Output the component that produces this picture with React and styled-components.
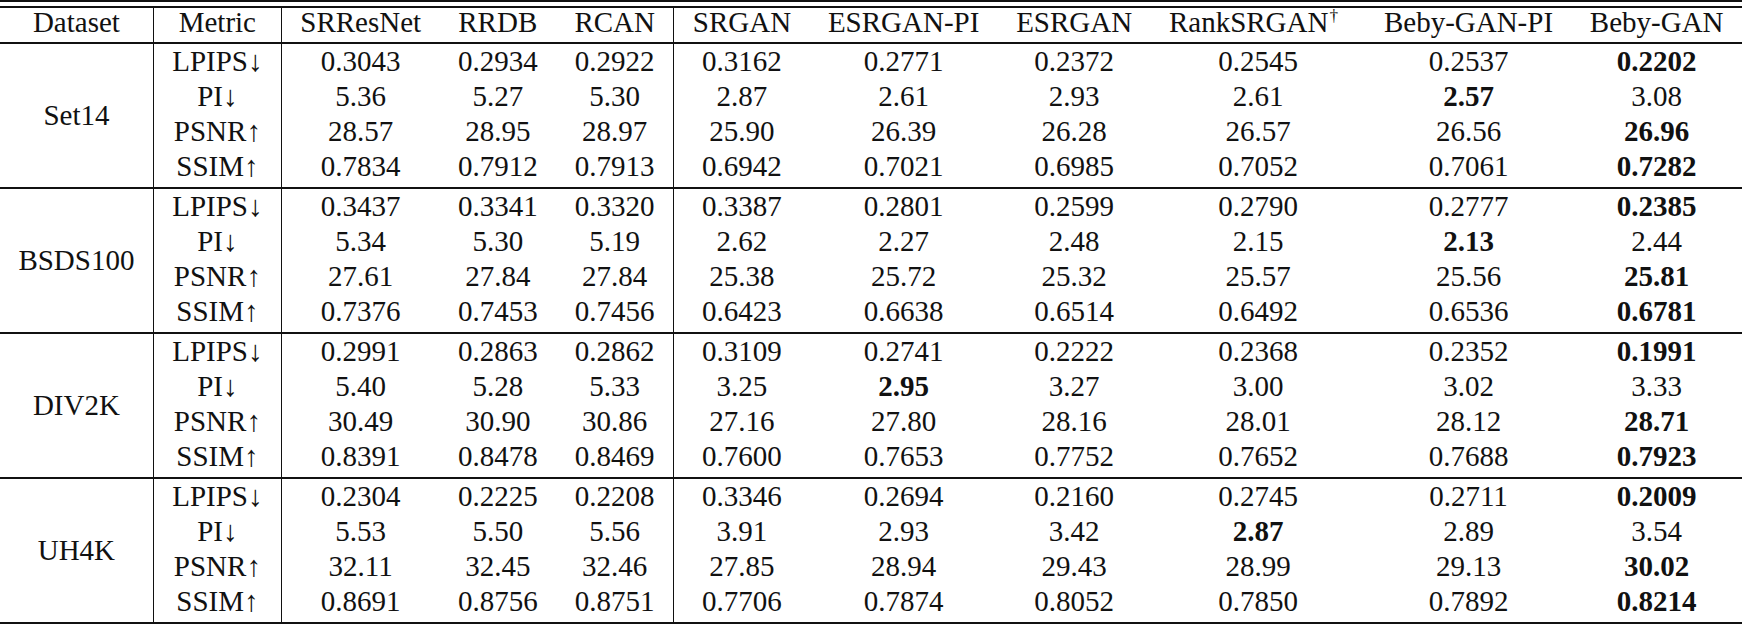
import React from "react";
import styled, { createGlobalStyle } from "styled-components";

const serif = `"Liberation Serif", "Times New Roman", Times, serif`;

const GlobalStyle = createGlobalStyle`
  html, body {
    margin: 0;
    padding: 0;
    background: #fff;
    font-family: ${serif};
  }
`;

const columns = [
  "SRResNet",
  "RRDB",
  "RCAN",
  "SRGAN",
  "ESRGAN-PI",
  "ESRGAN",
  "RankSRGAN",
  "Beby-GAN-PI",
  "Beby-GAN",
];

const groups = [
  {
    name: "Set14",
    rows: [
      ["LPIPS", "down", "0.3043 0.2934 0.2922 0.3162 0.2771 0.2372 0.2545 0.2537 0.2202*"],
      ["PI", "down", "5.36 5.27 5.30 2.87 2.61 2.93 2.61 2.57* 3.08"],
      ["PSNR", "up", "28.57 28.95 28.97 25.90 26.39 26.28 26.57 26.56 26.96*"],
      ["SSIM", "up", "0.7834 0.7912 0.7913 0.6942 0.7021 0.6985 0.7052 0.7061 0.7282*"],
    ],
  },
  {
    name: "BSDS100",
    rows: [
      ["LPIPS", "down", "0.3437 0.3341 0.3320 0.3387 0.2801 0.2599 0.2790 0.2777 0.2385*"],
      ["PI", "down", "5.34 5.30 5.19 2.62 2.27 2.48 2.15 2.13* 2.44"],
      ["PSNR", "up", "27.61 27.84 27.84 25.38 25.72 25.32 25.57 25.56 25.81*"],
      ["SSIM", "up", "0.7376 0.7453 0.7456 0.6423 0.6638 0.6514 0.6492 0.6536 0.6781*"],
    ],
  },
  {
    name: "DIV2K",
    rows: [
      ["LPIPS", "down", "0.2991 0.2863 0.2862 0.3109 0.2741 0.2222 0.2368 0.2352 0.1991*"],
      ["PI", "down", "5.40 5.28 5.33 3.25 2.95* 3.27 3.00 3.02 3.33"],
      ["PSNR", "up", "30.49 30.90 30.86 27.16 27.80 28.16 28.01 28.12 28.71*"],
      ["SSIM", "up", "0.8391 0.8478 0.8469 0.7600 0.7653 0.7752 0.7652 0.7688 0.7923*"],
    ],
  },
  {
    name: "UH4K",
    rows: [
      ["LPIPS", "down", "0.2304 0.2225 0.2208 0.3346 0.2694 0.2160 0.2745 0.2711 0.2009*"],
      ["PI", "down", "5.53 5.50 5.56 3.91 2.93 3.42 2.87* 2.89 3.54"],
      ["PSNR", "up", "32.11 32.45 32.46 27.85 28.94 29.43 28.99 29.13 30.02*"],
      ["SSIM", "up", "0.8691 0.8756 0.8751 0.7706 0.7874 0.8052 0.7850 0.7892 0.8214*"],
    ],
  },
];

const rule = "2px solid #111";

// outer rule of the double top line
const TableFrame = styled.div`
  display: inline-block;
  border-top: ${rule};
  padding-top: 4px;
`;

const Table = styled.table`
  border-collapse: separate;
  border-spacing: 0;
  border-top: ${rule};
  border-bottom: ${rule};
  font-family: ${serif};
  font-size: 29px;
  color: #111;
`;

const Cell = styled.td`
  padding: 0 18.4px ${(p) => (p.$last ? "3px" : "0")};
  line-height: 35px;
  font-family: ${serif};
  font-size: 29px;
  text-align: center;
  vertical-align: middle;
  white-space: nowrap;
  font-weight: ${(p) => (p.$bold ? 700 : 400)};
  border-right: ${(p) => (p.$rule ? "1px solid #111" : "none")};
  border-top: ${(p) => (p.$top ? rule : "none")};
`;

const HeadCell = styled(Cell).attrs({ as: "th" })`
  padding: 0 18.4px 5px;
  line-height: 29px;
  font-weight: 400;
  border-bottom: ${rule};
`;

const Dagger = styled.sup`
  font-size: 0.6em;
  line-height: 0;
  vertical-align: 0.62em;
  margin: 0 9px 0 1px;
`;

const Arrow = styled.span`
  font-family: ${serif};
`;

const ruleAfter = (i) => i === 2;

export default function App() {
  return (
    <>
      <GlobalStyle />
      <TableFrame>
        <Table>
          <thead>
            <tr>
              <HeadCell $rule>Dataset</HeadCell>
              <HeadCell $rule>Metric</HeadCell>
              {columns.map((c, i) => (
                <HeadCell key={c} $rule={ruleAfter(i)}>
                  {c}
                  {c === "RankSRGAN" && <Dagger>†</Dagger>}
                </HeadCell>
              ))}
            </tr>
          </thead>
          {groups.map((g, gi) => (
            <tbody key={g.name}>
              {g.rows.map(([metric, dir, values], r) => {
                const top = gi > 0 && r === 0;
                const last = r === g.rows.length - 1;
                return (
                  <tr key={metric}>
                    {r === 0 && (
                      <Cell $rule $top={top} rowSpan={g.rows.length}>
                        {g.name}
                      </Cell>
                    )}
                    <Cell $rule $top={top} $last={last}>
                      {metric}
                      <Arrow>{dir === "up" ? "↑" : "↓"}</Arrow>
                    </Cell>
                    {values.split(" ").map((v, i) => (
                      <Cell
                        key={i}
                        $rule={ruleAfter(i)}
                        $top={top}
                        $last={last}
                        $bold={v.endsWith("*")}
                      >
                        {v.replace("*", "")}
                      </Cell>
                    ))}
                  </tr>
                );
              })}
            </tbody>
          ))}
        </Table>
      </TableFrame>
    </>
  );
}
